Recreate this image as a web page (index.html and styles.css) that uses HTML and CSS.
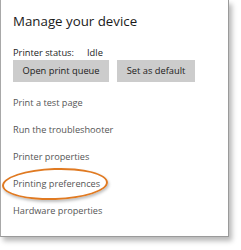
FILE: index.html
```html
<!DOCTYPE html>
<html>
<head>
<meta charset="utf-8">
<link rel="stylesheet" href="styles.css">
</head>
<body>
<div class="card">
  <h1 class="title">Manage your device</h1>
  <div class="status"><span class="status-label">Printer status:</span><span>Idle</span></div>
  <div class="buttons">
    <div class="btn btn-queue">Open print queue</div>
    <div class="btn btn-default">Set as default</div>
  </div>
  <ul class="links">
    <li>Print a test page</li>
    <li>Run the troubleshooter</li>
    <li>Printer properties</li>
    <li class="circled">Printing preferences<span class="ring"></span></li>
    <li>Hardware properties</li>
  </ul>
</div>
</body>
</html>
```
FILE: styles.css
```css
html, body {
  margin: 0;
  padding: 0;
  background: #fff;
}
body {
  width: 241px;
  height: 250px;
  overflow: hidden;
  font-family: "Open Sans", "Noto Sans", sans-serif;
}
.card {
  box-sizing: border-box;
  width: 229px;
  height: 237px;
  border-left: 1px solid #a8a8a8;
  border-right: 1px solid #9a9a9a;
  border-bottom: 1px solid #9a9a9a;
  box-shadow: 3px 4px 5px rgba(0,0,0,0.28);
  padding: 12px 0 0 12px;
  background: #fff;
}
.title {
  margin: 0;
  font-weight: 400;
  font-size: 13.3px;
  line-height: 18px;
  color: #1a1a1a;
}
.status {
  margin-top: 17px;
  font-size: 9.3px;
  line-height: 12px;
  color: #222;
  display: flex;
}
.status-label {
  width: 74px;
}
.buttons {
  display: flex;
  gap: 8px;
  margin-top: 1px;
}
.btn {
  background: #cccccc;
  height: 22px;
  font-size: 9.3px;
  line-height: 22px;
  color: #1a1a1a;
  text-align: center;
}
.btn-queue { width: 96px; }
.btn-default { width: 78px; }
.links {
  list-style: none;
  margin: 15px 0 0 0;
  padding: 0;
  display: flex;
  flex-direction: column;
  gap: 15px;
}
.links li {
  font-size: 9.2px;
  line-height: 12px;
  color: #555;
}
.circled {
  position: relative;
}
.ring {
  position: absolute;
  left: -11px;
  top: -10px;
  width: 102px;
  height: 28px;
  border: 2.5px solid #e07a22;
  border-radius: 50%;
  transform: rotate(-2deg);
  box-shadow: 1px 2px 3px rgba(0,0,0,0.25);
}
```
